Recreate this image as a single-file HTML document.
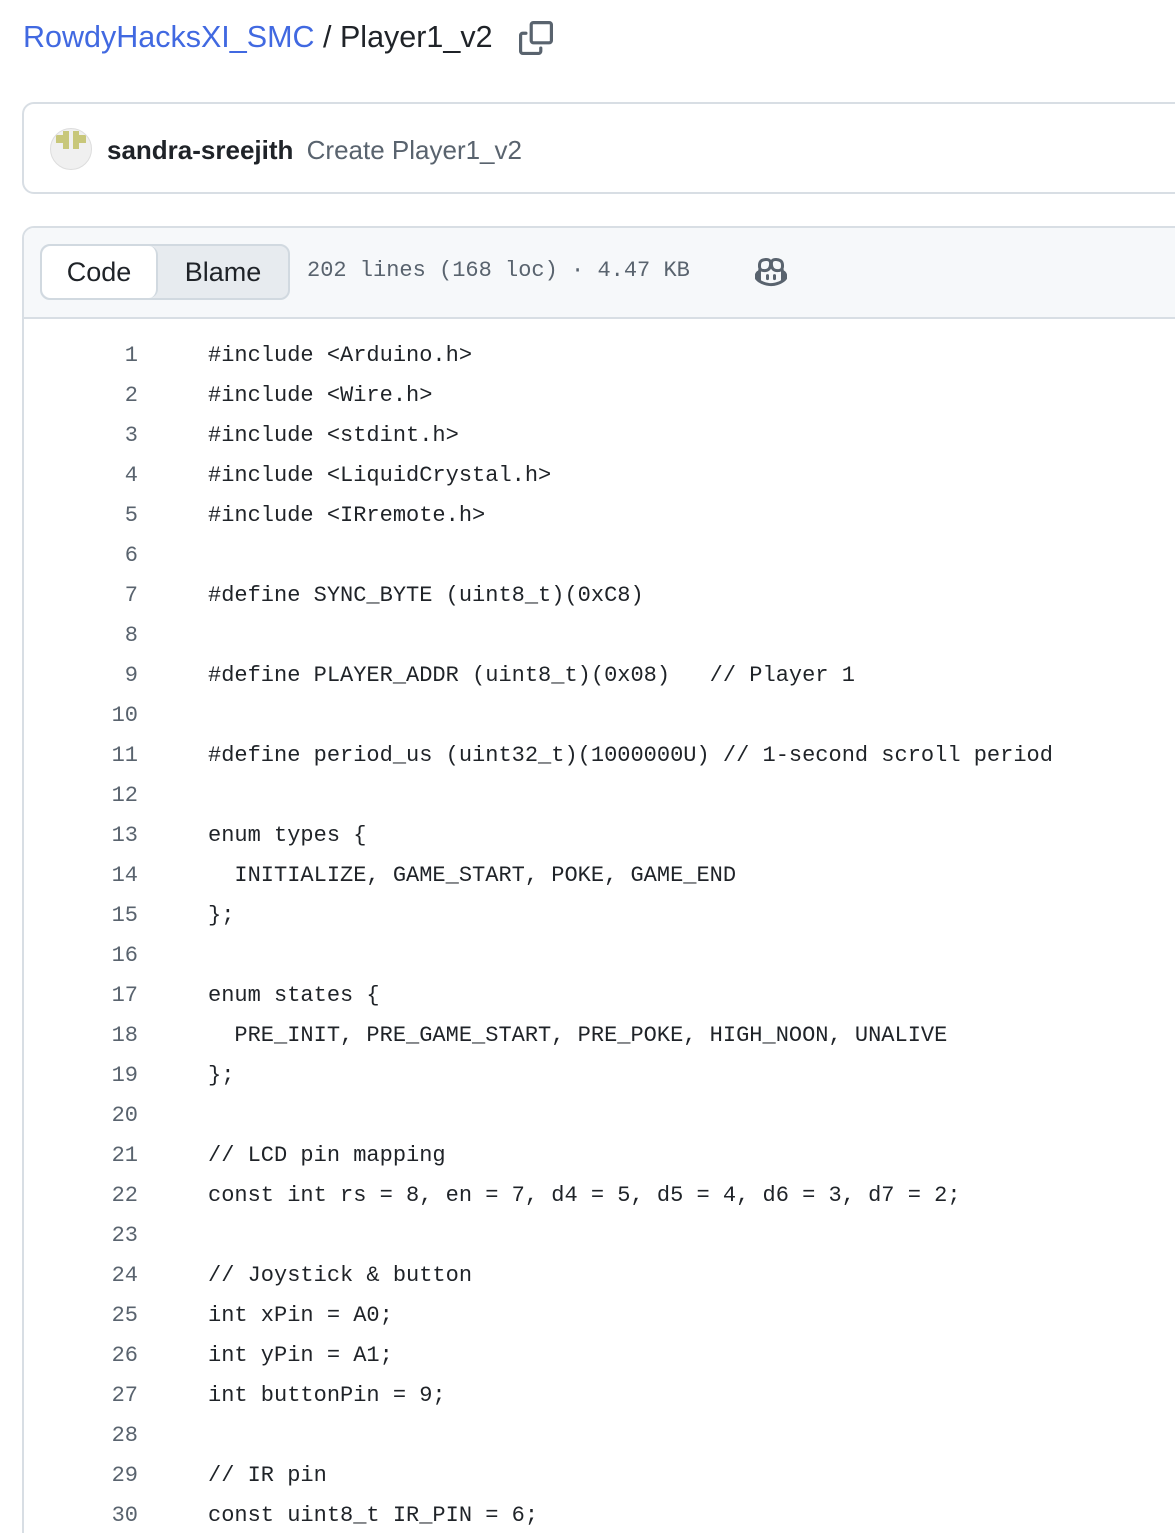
<!DOCTYPE html>
<html style="overflow:hidden;height:1533px"><head><meta charset="utf-8"><style>
body{margin:0;background:#fff;font-family:"Liberation Sans",sans-serif;color:#1f2328;width:1175px;height:1533px;overflow:hidden;position:relative}
.t{position:absolute;left:23px;top:20px;font-size:30.5px;white-space:nowrap}
.t a{color:#4169e1;text-decoration:none}
.c1{position:absolute;left:22px;top:102px;width:1200px;height:88px;border:2px solid #d8dee4;border-radius:12px}
.av{position:absolute;left:26px;top:24px;width:40px;height:40px;border-radius:50%;background:#f0f0f0;border:1px solid #ddd;overflow:hidden}
.c2{position:absolute;left:22px;top:226px;width:1200px;height:1320px;border:2px solid #d8dee4;border-radius:12px;overflow:hidden}
.hd{height:89px;background:#f6f8fa;border-bottom:2px solid #d8dee4;position:relative}
.seg{position:absolute;left:16px;top:16px;width:246px;height:52px;background:#e7ebef;border:2px solid #d1d9e0;border-radius:10px}
.seg .a{position:absolute;left:0;top:0;width:114px;height:52px;background:#fff;border-radius:9px;border-right:2px solid #d1d9e0;font-size:27px;line-height:52px;text-align:center}
.seg .b{position:absolute;left:116px;top:0;width:130px;line-height:52px;font-size:27px;text-align:center}
.meta{position:absolute;left:283px;top:30px;font-family:"Liberation Mono",monospace;font-size:22px;color:#59636e}
pre{margin:0;font-family:"Liberation Mono",monospace;font-size:22px;line-height:40px;position:absolute;top:108px}
.ln{left:0;width:114px;text-align:right;color:#59636e}
.cd{left:184px;color:#1f2328}
</style></head><body>
<div class="t"><a>RowdyHacksXI_SMC</a> / Player1_v2</div>
<svg style="position:absolute;left:519px;top:21px" width="34" height="34" viewBox="0 0 16 16" fill="#59636e"><path d="M0 6.75C0 5.784.784 5 1.75 5h1.5a.75.75 0 0 1 0 1.5h-1.5a.25.25 0 0 0-.25.25v7.5c0 .138.112.25.25.25h7.5a.25.25 0 0 0 .25-.25v-1.5a.75.75 0 0 1 1.5 0v1.5A1.750 1.750 0 0 1 9.25 16h-7.5A1.75 1.75 0 0 1 0 14.25Z"/><path d="M5 1.75C5 .784 5.784 0 6.75 0h7.5C15.216 0 16 .784 16 1.75v7.5A1.75 1.75 0 0 1 14.25 11h-7.5A1.75 1.75 0 0 1 5 9.25Zm1.75-.25a.25.25 0 0 0-.25.25v7.5c0 .138.112.25.25.25h7.5a.25.25 0 0 0 .25-.25v-7.5a.25.25 0 0 0-.25-.25Z"/></svg>
<div class="c1"><div class="av"><div style="position:absolute;left:5px;top:6px;width:8px;height:8px;background:#c8c77a"></div><div style="position:absolute;left:12px;top:2px;width:6px;height:18px;background:#c8c77a"></div><div style="position:absolute;left:22px;top:2px;width:6px;height:18px;background:#c8c77a"></div><div style="position:absolute;left:27px;top:6px;width:8px;height:8px;background:#c8c77a"></div></div>
<div style="position:absolute;left:83px;top:31px;font-size:26px;white-space:nowrap"><b style="font-weight:600">sandra-sreejith</b> <span style="color:#59636e;margin-left:6px">Create Player1_v2</span></div></div>
<div class="c2"><div class="hd"><div class="seg"><div class="a">Code</div><div class="b">Blame</div></div>
<div class="meta">202 lines (168 loc) · 4.47 KB</div>
<svg style="position:absolute;left:730px;top:28px" width="34" height="32" viewBox="0 0 16 16" fill="#59636e"><path d="M7.998 15.035c-4.562 0-7.873-2.914-7.998-3.749V9.338c.085-.628.677-1.686 1.588-2.065.013-.07.024-.143.036-.218.029-.183.06-.384.126-.612-.201-.508-.254-1.084-.254-1.656 0-.87.128-1.769.693-2.484.579-.733 1.494-1.124 2.724-1.261 1.206-.134 2.262.034 2.944.765.05.053.096.108.139.165.044-.057.094-.112.143-.165.682-.731 1.738-.899 2.944-.765 1.23.137 2.145.528 2.724 1.261.566.715.693 1.614.693 2.484 0 .572-.053 1.148-.254 1.656.066.228.098.429.126.612.012.076.024.148.037.218.924.385 1.522 1.471 1.591 2.095v1.872c0 .766-3.351 3.795-8.002 3.795Zm0-1.485c2.28 0 4.584-1.11 5.002-1.433V7.862l-.023-.116c-.49.21-1.075.291-1.727.291-1.146 0-2.059-.327-2.710-.991A3.222 3.222 0 0 1 8 6.303a3.24 3.24 0 0 1-.544.743c-.65.664-1.563.991-2.71.991-.652 0-1.236-.081-1.727-.291l-.023.116v4.255c.419.323 2.722 1.433 5.002 1.433ZM6.762 2.830c-.193-.206-.637-.413-1.682-.297-1.019.113-1.479.404-1.713.7-.247.312-.369.789-.369 1.554 0 .793.129 1.171.308 1.371.162.181.519.379 1.442.379.853 0 1.339-.235 1.638-.54.315-.322.527-.827.617-1.553.117-.935-.037-1.395-.241-1.614Zm4.155-.297c-1.044-.116-1.488.091-1.681.297-.204.219-.359.679-.242 1.614.091.726.303 1.231.618 1.553.299.305.784.54 1.638.54.922 0 1.28-.198 1.442-.379.179-.2.308-.578.308-1.371 0-.765-.123-1.242-.37-1.554-.233-.296-.693-.587-1.713-.7Z"/><path d="M6.25 9.037a.75.75 0 0 1 .75.75v1.501a.75.75 0 0 1-1.5 0V9.787a.75.75 0 0 1 .75-.75Zm4.25.75v1.501a.75.75 0 0 1-1.5 0V9.787a.75.75 0 0 1 1.5 0Z"/></svg></div>
<pre class="ln">1
2
3
4
5
6
7
8
9
10
11
12
13
14
15
16
17
18
19
20
21
22
23
24
25
26
27
28
29
30
31</pre>
<pre class="cd">#include &lt;Arduino.h&gt;
#include &lt;Wire.h&gt;
#include &lt;stdint.h&gt;
#include &lt;LiquidCrystal.h&gt;
#include &lt;IRremote.h&gt;

#define SYNC_BYTE (uint8_t)(0xC8)

#define PLAYER_ADDR (uint8_t)(0x08)   // Player 1

#define period_us (uint32_t)(1000000U) // 1-second scroll period

enum types {
  INITIALIZE, GAME_START, POKE, GAME_END
};

enum states {
  PRE_INIT, PRE_GAME_START, PRE_POKE, HIGH_NOON, UNALIVE
};

// LCD pin mapping
const int rs = 8, en = 7, d4 = 5, d5 = 4, d6 = 3, d7 = 2;

// Joystick &amp; button
int xPin = A0;
int yPin = A1;
int buttonPin = 9;

// IR pin
const uint8_t IR_PIN = 6;
</pre></div>
</body></html>
